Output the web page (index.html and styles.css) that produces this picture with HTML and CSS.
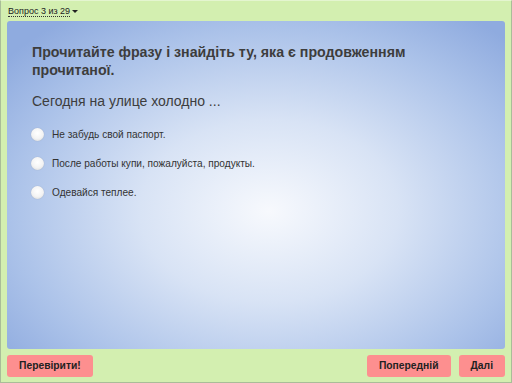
FILE: index.html
```html
<!DOCTYPE html>
<html lang="uk">
<head>
  <meta charset="UTF-8">
  <title>Тест</title>
  <link rel="stylesheet" href="styles.css">
</head>
<body>
  <div class="frame">
    <div class="topbar">
      <span class="counter">Вопрос 3 из 29</span><span class="caret"></span>
    </div>

    <div class="panel">
      <h1 class="question">Прочитайте фразу і знайдіть ту, яка є продовженням прочитаної.</h1>
      <p class="phrase">Сегодня на улице холодно ...</p>

      <ul class="answers">
        <li><span class="radio"></span>Не забудь свой паспорт.</li>
        <li><span class="radio"></span>После работы купи, пожалуйста, продукты.</li>
        <li><span class="radio"></span>Одевайся теплее.</li>
      </ul>
    </div>

    <div class="footer">
      <button class="btn">Перевірити!</button>
      <div class="nav">
        <button class="btn">Попередній</button>
        <button class="btn">Далі</button>
      </div>
    </div>
  </div>
</body>
</html>
```

FILE: styles.css
```css
html, body {
  margin: 0;
  padding: 0;
}
body {
  font-family: 'Liberation Sans', Arial, sans-serif;
  background-color: #d3efb0;
}
.frame {
  box-sizing: border-box;
  width: 512px;
  height: 383px;
  border: 1px solid #a9bd98;
  border-top-color: #e4f5d0;
  display: flex;
  flex-direction: column;
  padding: 0 6px;
}
.topbar {
  height: 20px;
  display: flex;
  align-items: center;
  padding-left: 1px;
  font-size: 9px;
  color: #222;
}
.counter {
  border-bottom: 1px dotted #333;
  line-height: 10px;
}
.caret {
  width: 0;
  height: 0;
  border-left: 3px solid transparent;
  border-right: 3px solid transparent;
  border-top: 3px solid #222;
  margin-left: 2px;
}
.panel {
  height: 328px;
  box-sizing: border-box;
  border-radius: 3px;
  padding: 22px 25px 0 25px;
  background: radial-gradient(ellipse 340px 240px at 262px 190px, #f7f9fd 0%, #d8e3f5 38%, #abc2e9 76%, #8fabdf 100%);
  color: #3d3d3d;
}
.question {
  margin: 0;
  font-size: 14.2px;
  line-height: 18px;
  font-weight: bold;
  width: 400px;
}
.phrase {
  margin: 13px 0 0 0;
  font-size: 14px;
  line-height: 18px;
}
.answers {
  list-style: none;
  margin: 10px 0 0 0;
  padding: 0;
}
.answers li {
  display: flex;
  align-items: center;
  height: 29px;
  font-size: 10.1px;
  color: #333;
}
.radio {
  width: 13px;
  height: 13px;
  border-radius: 50%;
  background: radial-gradient(circle at 50% 40%, #ffffff 0%, #f3f3f3 55%, #d0d0d0 100%);
  box-shadow: 0 0 1px #8f99ad;
  margin: 0 8px 0 -1px;
}
.footer {
  flex: 1;
  display: flex;
  justify-content: space-between;
  align-items: center;
}
.nav {
  display: flex;
  gap: 8px;
}
.btn {
  height: 22px;
  padding: 0 12px;
  font-family: 'Liberation Sans', Arial, sans-serif;
  font-size: 10.3px;
  font-weight: bold;
  color: #222;
  background-color: #fd8f8f;
  border: none;
  border-radius: 3px;
}
```
